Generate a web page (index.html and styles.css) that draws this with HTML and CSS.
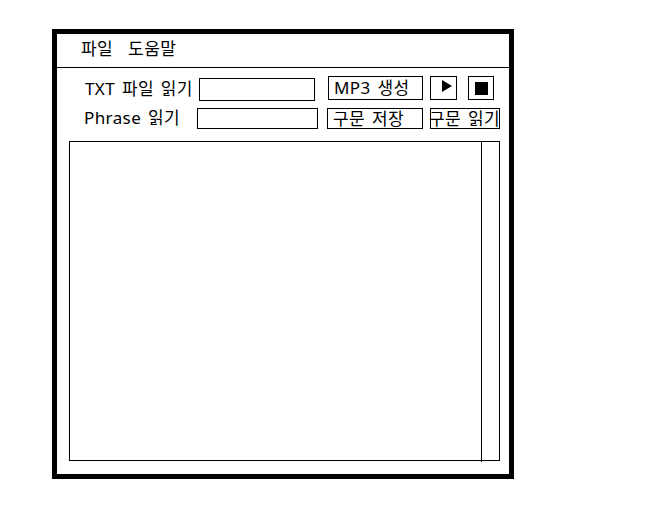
FILE: index.html
```html
<!DOCTYPE html>
<html lang="ko">
<head>
<meta charset="utf-8">
<title>TTS</title>
<link rel="stylesheet" href="styles.css">
</head>
<body>
<div class="window">
  <div class="menubar">
    <span class="menu-item">파일</span>
    <span class="menu-item">도움말</span>
  </div>
  <div class="row row-1">
    <span class="label label-txt">TXT 파일 읽기</span>
    <div class="field field-txt"></div>
    <div class="btn btn-mp3">MP3 생성</div>
    <div class="btn btn-play"><svg class="play-icon" width="10" height="12" viewBox="0 0 10 12"><polygon points="0,0 10,6 0,12" fill="#000"/></svg></div>
    <div class="btn btn-stop"><span class="stop-square"></span></div>
  </div>
  <div class="row row-2">
    <span class="label label-phrase">Phrase 읽기</span>
    <div class="field field-phrase"></div>
    <div class="btn btn-save">구문 저장</div>
    <div class="btn btn-read">구문 읽기</div>
  </div>
  <div class="textbox">
    <div class="text-content"></div>
    <div class="scrollbar"></div>
  </div>
</div>
</body>
</html>
```

FILE: styles.css
```css
html, body {
  margin: 0;
  padding: 0;
  background: #fff;
}
body {
  font-family: "Noto Sans", "Noto Sans CJK KR", sans-serif;
  font-size: 17px;
  letter-spacing: 0.4px;
  word-spacing: 2px;
  color: #000;
}
.window {
  margin: 29px 0 0 52px;
  width: 452px;
  height: 440px;
  border: 5px solid #000;
  display: flex;
  flex-direction: column;
}
.menubar {
  box-sizing: border-box;
  height: 34px;
  border-bottom: 1px solid #000;
  display: flex;
  align-items: center;
  gap: 15px;
  padding-left: 24px;
  padding-bottom: 4px;
  line-height: 20px;
}
.row {
  display: flex;
  align-items: flex-start;
}
.row-1 {
  margin-top: 8px;
  height: 25px;
  padding-left: 28px;
}
.row-2 {
  margin-top: 7px;
  height: 21px;
  padding-left: 27px;
}
.label {
  line-height: 20px;
  white-space: nowrap;
}
.label-txt {
  width: 114px;
  margin-top: 3px;
}
.label-phrase {
  width: 113px;
  margin-top: 0;
}
.field {
  box-sizing: border-box;
  border: 1px solid #000;
  background: #fff;
}
.field-txt {
  width: 116px;
  height: 23px;
  margin-top: 2px;
}
.field-phrase {
  width: 121px;
  height: 21px;
}
.btn {
  box-sizing: border-box;
  border: 1px solid #000;
  background: #fff;
  display: flex;
  align-items: center;
  white-space: nowrap;
  line-height: 20px;
}
.btn-mp3 {
  width: 95px;
  height: 24px;
  margin-left: 13px;
  padding-left: 5px;
}
.btn-play {
  width: 27px;
  height: 24px;
  margin-left: 7px;
  padding-left: 11px;
}
.play-icon {
  display: block;
  margin-bottom: 4px;
}
.btn-stop {
  width: 26px;
  height: 24px;
  margin-left: 11px;
  justify-content: center;
}
.stop-square {
  width: 13px;
  height: 13px;
  background: #000;
}
.btn-save {
  width: 96px;
  height: 21px;
  margin-left: 9px;
  padding-left: 5px;
}
.btn-read {
  width: 70px;
  height: 21px;
  margin-left: 7px;
  padding-left: 0;
  text-indent: -2px;
}
.textbox {
  margin: 12px 0 0 12px;
  width: 431px;
  height: 320px;
  box-sizing: border-box;
  border: 1px solid #000;
  display: flex;
}
.text-content {
  flex: 1;
}
.scrollbar {
  width: 17px;
  height: calc(100% + 2px);
  border-left: 1px solid #000;
}
```
